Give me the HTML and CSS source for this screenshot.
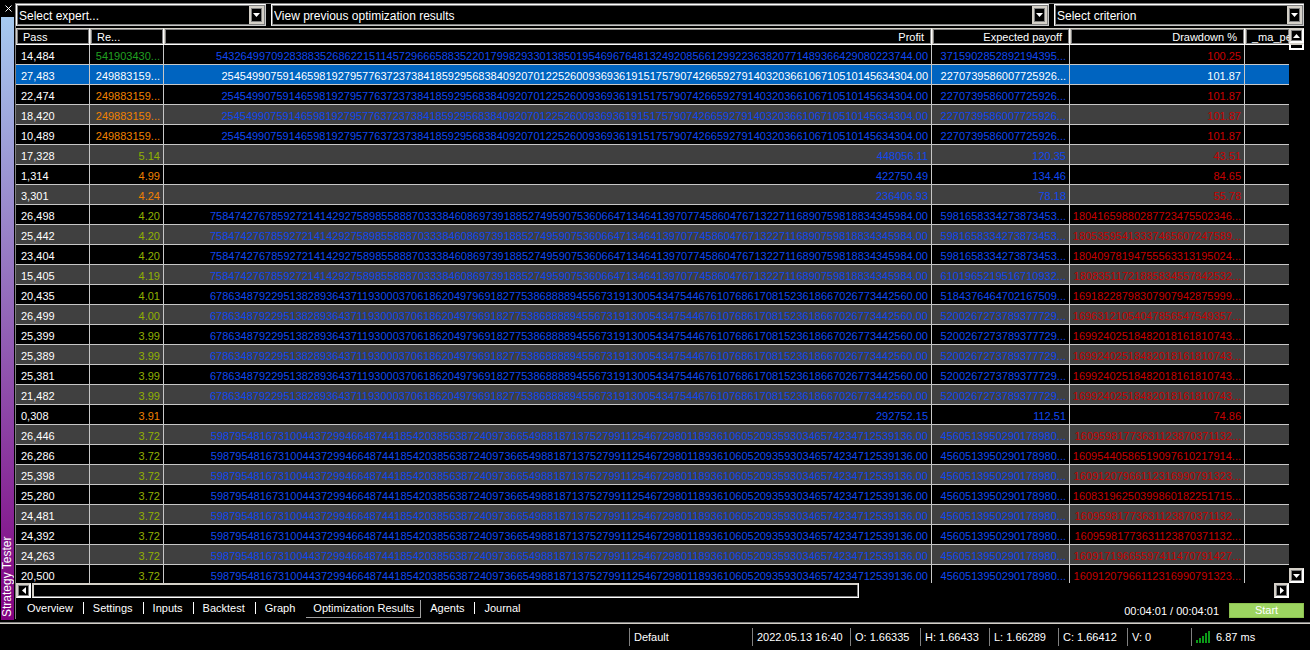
FILE: index.html
```html
<!DOCTYPE html>
<html lang="en">

<head>
    <meta charset="UTF-8">
    <title>Strategy Tester</title>
    <link rel="stylesheet" href="styles.css">
</head>

<body>
    <div class="tester">
        <div class="side">
            <button class="close" aria-label="Close">
                <svg width="7" height="7" viewBox="0 0 7 7"><path d="M0.5 0.5L6.5 6.5M6.5 0.5L0.5 6.5" stroke="#fff"/></svg>
            </button>
            <div class="side-title">Strategy Tester</div>
        </div>

        <div class="content">
            <div class="filters">
                <div class="combo combo-side">
                    <select aria-label="Expert"><option>Select expert...</option></select>
                    <span class="combo-arrow"><svg width="7" height="4" viewBox="0 0 7 4"><path d="M0 0H7L3.5 4Z" fill="#fff"/></svg></span>
                </div>
                <div class="combo combo-main">
                    <select aria-label="Results"><option>View previous optimization results</option></select>
                    <span class="combo-arrow"><svg width="7" height="4" viewBox="0 0 7 4"><path d="M0 0H7L3.5 4Z" fill="#fff"/></svg></span>
                </div>
                <div class="combo combo-side">
                    <select aria-label="Criterion"><option>Select criterion</option></select>
                    <span class="combo-arrow"><svg width="7" height="4" viewBox="0 0 7 4"><path d="M0 0H7L3.5 4Z" fill="#fff"/></svg></span>
                </div>
            </div>

            <div class="results">
                <div class="table-wrap">
                    <table>
                        <colgroup>
                            <col class="col-pass">
                            <col class="col-result">
                            <col>
                            <col class="col-payoff">
                            <col class="col-drawdown">
                            <col class="col-param">
                        </colgroup>
                        <thead>
                            <tr>
                                <th class="left">Pass</th>
                                <th class="left">Re...</th>
                                <th>Profit</th>
                                <th>Expected payoff</th>
                                <th>Drawdown %</th>
                                <th class="left last">_ma_pe</th>
                            </tr>
                        </thead>
                        <tbody id="rows"></tbody>
                    </table>
                </div>
                <div class="vscroll">
                    <button class="scroll-btn" aria-label="Scroll up"><svg width="7" height="4" viewBox="0 0 7 4"><path d="M0 4H7L3.5 0Z" fill="#fff"/></svg></button>
                    <div class="vthumb"></div>
                    <button class="scroll-btn to-end" aria-label="Scroll down"><svg width="7" height="4" viewBox="0 0 7 4"><path d="M0 0H7L3.5 4Z" fill="#fff"/></svg></button>
                </div>
            </div>

            <div class="hscroll">
                <button class="scroll-btn" aria-label="Scroll left"><svg width="4" height="7" viewBox="0 0 4 7"><path d="M4 0V7L0 3.5Z" fill="#fff"/></svg></button>
                <div class="htrack"><div class="hthumb"></div></div>
                <button class="scroll-btn" aria-label="Scroll right"><svg width="4" height="7" viewBox="0 0 4 7"><path d="M0 0V7L4 3.5Z" fill="#fff"/></svg></button>
            </div>

            <div class="footer">
                <nav class="tabs">
                    <a href="#">Overview</a>
                    <a href="#">Settings</a>
                    <a href="#">Inputs</a>
                    <a href="#">Backtest</a>
                    <a href="#" class="before-active">Graph</a>
                    <a href="#" class="active">Optimization Results</a>
                    <a href="#">Agents</a>
                    <a href="#">Journal</a>
                </nav>
                <span class="elapsed">00:04:01 / 00:04:01</span>
                <button class="start">Start</button>
            </div>
        </div>
    </div>

    <div class="status">
        <span class="profile">Default</span>
        <span class="date">2022.05.13 16:40</span>
        <span class="open">O: 1.66335</span>
        <span class="price">H: 1.66433</span>
        <span class="price">L: 1.66289</span>
        <span class="price">C: 1.66412</span>
        <span class="volume">V: 0</span>
        <span class="ping">
            <svg width="15" height="12" viewBox="0 0 15 12"><path d="M0 9h2v3h-2zM3 7h2v5h-2zM6 5h2v7h-2zM9 2h2v10h-2zM12 0h2v12h-2z" fill="#0c9a18"/></svg>
            6.87 ms
        </span>
    </div>

    <script src="script.js"></script>
</body>

</html>
```
FILE: styles.css
```css
* {
    box-sizing: border-box;
}

body {
    margin: 0;
    height: 100vh;
    display: flex;
    flex-direction: column;
    background: #000;
    color: #fff;
    font-family: "Liberation Sans", Arial, sans-serif;
    font-size: 11px;
    line-height: 14px;
}

button,
select {
    font: inherit;
    color: inherit;
    background: #000;
    border: none;
    border-radius: 0;
    padding: 0;
    margin: 0;
}

svg {
    display: block;
}

.tester {
    flex: 1;
    min-height: 0;
    display: flex;
    padding-right: 6px;
}

/* left caption strip */
.side {
    width: 14px;
    margin-left: 1px;
    padding-bottom: 2px;
    display: flex;
    flex-direction: column;
}

.close {
    height: 17px;
    display: flex;
    justify-content: center;
    align-items: center;
}

.side-title {
    flex: 1;
    width: 13px;
    padding-top: 3px;
    writing-mode: vertical-rl;
    transform: rotate(180deg);
    font-size: 12px;
    line-height: 13px;
    background: linear-gradient(to top, #a6caf0, #800080);
}

.content {
    flex: 1;
    min-width: 0;
    margin: 3px 0;
    border-left: 1px solid #808080;
    display: flex;
    flex-direction: column;
}

/* drop-downs */
.filters {
    display: flex;
    gap: 5px;
    border-top: 1px solid #808080;
    margin-bottom: 2px;
}

.combo {
    display: flex;
    height: 22px;
    border: 1px solid;
    border-color: #fff #c8c8c8 #c8c8c8 #fff;
    outline: 1px solid #808080;
    outline-offset: -2px;
    padding: 1px;
}

.combo-side {
    width: 250px;
}

.combo-main {
    flex: 1;
}

.combo select {
    appearance: none;
    flex: 1;
    min-width: 0;
    padding: 1px 0 0 1px;
    font-size: 12px;
    outline: none;
}

.combo-arrow,
.scroll-btn {
    width: 15px;
    display: flex;
    justify-content: center;
    align-items: center;
    border: 2px solid #d4d0c8;
    outline: 1px solid #808080;
    outline-offset: -3px;
}

/* results table */
.results {
    flex: 1;
    min-height: 0;
    display: flex;
}

.table-wrap {
    flex: 1;
    min-width: 0;
    overflow: hidden;
}

table {
    width: 100%;
    table-layout: fixed;
    border-collapse: separate;
    border-spacing: 0;
}

.col-pass,
.col-result {
    width: 74px;
}

.col-payoff {
    width: 138px;
}

.col-drawdown {
    width: 175px;
}

.col-param {
    width: 44px;
}

th,
td {
    overflow: hidden;
    white-space: nowrap;
    text-align: right;
    font-weight: normal;
}

th {
    height: 17px;
    padding: 0 7px 0 6px;
    border: 1px solid #d4d0c8;
    border-right-color: #fff;
    border-bottom-color: #fff;
    box-shadow: inset -1px -1px #808080, inset 1px 1px #808080;
}

td {
    height: 20px;
    padding: 2px 3px 0 2px;
    border-right: 1px solid #c8c8c8;
    border-bottom: 1px solid #c8c8c8;
    color: #1048f0;
}

td:first-child {
    padding-left: 5px;
    text-align: left;
    color: #fff;
}

td:nth-child(5) {
    color: #c80000;
}

th.last,
td:last-child {
    border-right: none;
}

th.left {
    text-align: left;
}

th.last {
    padding: 0 0 0 6px;
}

tbody tr:nth-child(even) {
    background: #404040;
}

tbody tr.selected {
    background: #0064c0;
}

td.best {
    color: #20a020;
}

td.mid {
    color: #90b000;
}

td.low {
    color: #f08000;
}

tbody tr.selected td {
    color: #fff;
}

/* scrollbars */
.scroll-btn {
    height: 15px;
    flex-shrink: 0;
    border-color: #d4d0c8 #fff #fff #d4d0c8;
}

.vscroll {
    width: 15px;
    display: flex;
    flex-direction: column;
}

.vthumb {
    height: 7px;
    border: 2px solid #fff;
    border-top-color: #d4d0c8;
}

.to-end {
    margin-top: auto;
}

.hscroll {
    display: flex;
    margin-right: 15px;
}

.htrack {
    flex: 1;
    padding-left: 1px;
}

.hthumb {
    width: 66.6%;
    height: 15px;
    border: 1px solid;
    border-color: #d4d0c8 #fff #fff #d4d0c8;
    box-shadow: inset 1px 1px #d4d0c8, inset -1px -1px #808080;
}

/* tabs and start button */
.footer {
    display: flex;
    align-items: flex-end;
    padding: 2px 0 1px;
}

.tabs {
    display: flex;
    align-items: flex-start;
    flex: 1;
    padding-left: 2px;
}

.tabs a {
    display: flex;
    align-items: center;
    color: #fff;
    text-decoration: none;
    padding: 0 0 3px 9px;
    height: 18px;
}

.tabs a::after {
    content: "";
    width: 1px;
    height: 12px;
    margin-left: 10px;
    background: #fff;
}

.tabs .before-active::after,
.tabs a:last-child::after {
    background: none;
}

.tabs .active {
    padding: 0 6px 2px 7px;
    border: 1px solid #a0a0a0;
    border-width: 0 1px 1px 0;
}

.tabs .active::after {
    display: none;
}

.elapsed {
    margin-right: 10px;
}

.start {
    width: 75px;
    height: 15px;
    border: 1px solid #8cc050;
    background: #9cd460;
    line-height: 13px;
}

/* status bar */
.status {
    height: 28px;
    display: flex;
    justify-content: flex-end;
    align-items: center;
    border-top: 1px solid #808080;
    box-shadow: inset 0 1px #d4d0c8;
}

.status span {
    height: 18px;
    line-height: 18px;
    padding-left: 4px;
    border-left: 1px solid #808080;
    white-space: nowrap;
}

.profile {
    width: 123px;
}

.date {
    width: 98px;
}

.open {
    width: 70px;
}

.price {
    width: 69px;
}

.volume {
    width: 64px;
}

.ping {
    width: 119px;
    display: flex;
    align-items: center;
    gap: 5px;
}
```
FILE: script.js
```js
const profits = {
    a: "543264997092838835268622151145729666588352201799829330138501954696764813249208566129922363820771489366429080223744.00",
    b: "25454990759146598192795776372373841859295683840920701225260093693619151757907426659279140320366106710510145634304.00",
    c: "7584742767859272141429275898558887033384608697391885274959075360664713464139707745860476713227116890759818834345984.00",
    d: "6786348792295138289364371193000370618620497969182775386888894556731913005434754467610768617081523618667026773442560.00",
    e: "5987954816731004437299466487441854203856387240973665498818713752799112546729801189361060520935930346574234712539136.00"
};

// pass, result, result colour, profit, expected payoff, drawdown
const rows = [
    ["14,484", "541903430...", "best", "a", "3715902852892194395...", "100.25"],
    ["27,483", "249883159...", "low", "b", "2270739586007725926...", "101.87"],
    ["22,474", "249883159...", "low", "b", "2270739586007725926...", "101.87"],
    ["18,420", "249883159...", "low", "b", "2270739586007725926...", "101.87"],
    ["10,489", "249883159...", "low", "b", "2270739586007725926...", "101.87"],
    ["17,328", "5.14", "mid", "448056.11", "120.35", "43.51"],
    ["1,314", "4.99", "low", "422750.49", "134.46", "84.65"],
    ["3,301", "4.24", "low", "236406.93", "78.18", "55.78"],
    ["26,498", "4.20", "mid", "c", "5981658334273873453...", "18041659880287723475502346..."],
    ["25,442", "4.20", "mid", "c", "5981658334273873453...", "18053595413337465607247589..."],
    ["23,404", "4.20", "mid", "c", "5981658334273873453...", "18040978194755563313195024..."],
    ["15,405", "4.19", "mid", "c", "6101965219516710932...", "18083511721885834557842532..."],
    ["20,435", "4.01", "mid", "d", "5184376464702167509...", "16918228798307907942875999..."],
    ["26,499", "4.00", "mid", "d", "5200267273789377729...", "16963121054047856547549357..."],
    ["25,399", "3.99", "mid", "d", "5200267273789377729...", "16992402518482018161810743..."],
    ["25,389", "3.99", "mid", "d", "5200267273789377729...", "16992402518482018161810743..."],
    ["25,381", "3.99", "mid", "d", "5200267273789377729...", "16992402518482018161810743..."],
    ["21,482", "3.99", "mid", "d", "5200267273789377729...", "16992402518482018161810743..."],
    ["0,308", "3.91", "low", "292752.15", "112.51", "74.86"],
    ["26,446", "3.72", "mid", "e", "4560513950290178980...", "16095981773631123870371132..."],
    ["26,286", "3.72", "mid", "e", "4560513950290178980...", "16095440586519097610217914..."],
    ["25,398", "3.72", "mid", "e", "4560513950290178980...", "16091207966112316990791323..."],
    ["25,280", "3.72", "mid", "e", "4560513950290178980...", "16083196250399860182251715..."],
    ["24,481", "3.72", "mid", "e", "4560513950290178980...", "16095981773631123870371132..."],
    ["24,392", "3.72", "mid", "e", "4560513950290178980...", "16095981773631123870371132..."],
    ["24,263", "3.72", "mid", "e", "4560513950290178980...", "16091719665597411470791427..."],
    ["20,500", "3.72", "mid", "e", "4560513950290178980...", "16091207966112316990791323..."]
];

const tbody = document.getElementById("rows");

rows.forEach(([pass, result, level, profit, payoff, drawdown]) => {
    const tr = document.createElement("tr");
    if (pass === "27,483") {
        tr.className = "selected";
    }
    [pass, result, profits[profit] || profit, payoff, drawdown, ""].forEach((text, i) => {
        const td = document.createElement("td");
        td.textContent = text;
        if (i === 1) {
            td.className = level;
        }
        tr.appendChild(td);
    });
    tbody.appendChild(tr);
});
```
